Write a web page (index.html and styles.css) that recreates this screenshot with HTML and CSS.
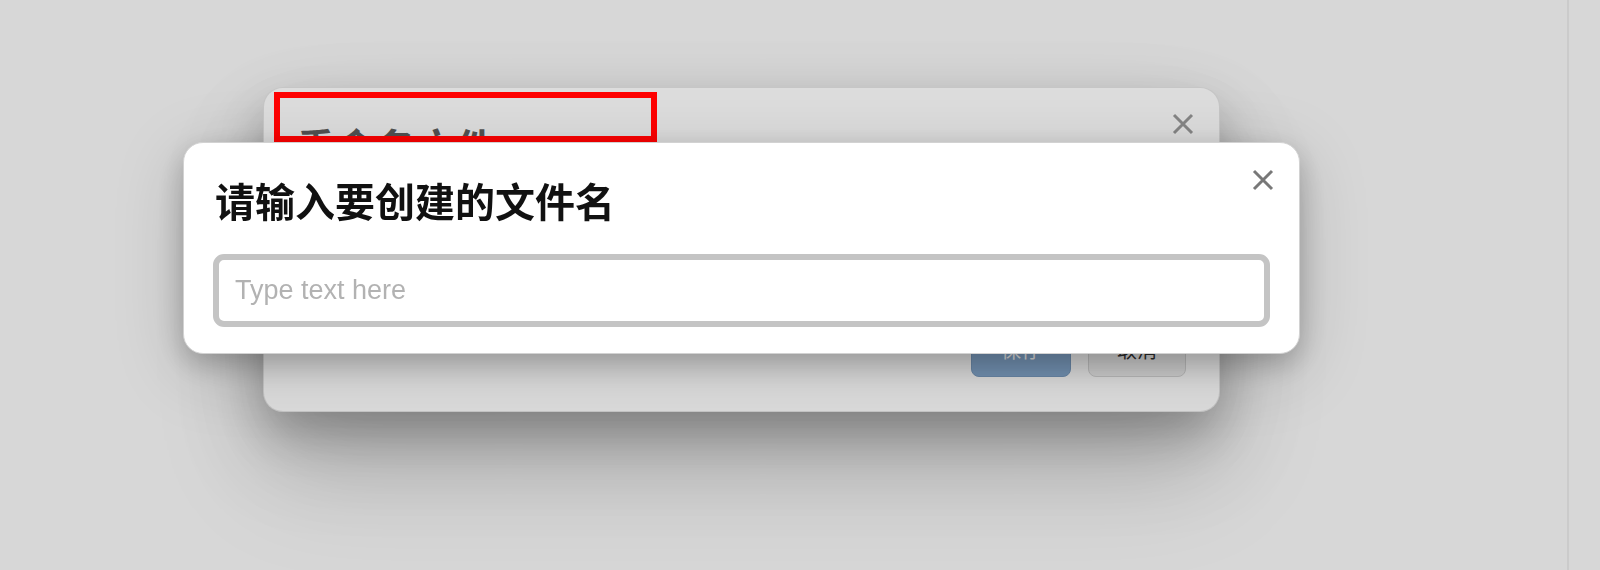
FILE: index.html
```html
<!DOCTYPE html>
<html lang="zh-CN">
<head>
<meta charset="utf-8">
<title>重命名文件</title>
<link rel="stylesheet" href="styles.css">
</head>
<body>
<div class="page">
  <main class="main"></main>
  <aside class="side"></aside>
</div>

<section class="dialog dialog-back" aria-label="重命名文件">
  <h2 class="dialog-title back-title">重命名文件</h2>
  <button class="close close-back" aria-label="关闭">
    <svg viewBox="0 0 22 22" width="22" height="22"><path d="M2 2 L20 20 M20 2 L2 20" /></svg>
  </button>
  <div class="back-body"></div>
  <div class="actions">
    <button class="btn btn-primary">保存</button>
    <button class="btn btn-default">取消</button>
  </div>
</section>

<div class="overlay"></div>
<div class="highlight"></div>

<section class="dialog dialog-front" aria-label="请输入要创建的文件名">
  <h2 class="dialog-title front-title">请输入要创建的文件名</h2>
  <button class="close close-front" aria-label="关闭">
    <svg viewBox="0 0 22 22" width="22" height="22"><path d="M2 2 L20 20 M20 2 L2 20" /></svg>
  </button>
  <input class="text-input" type="text" placeholder="Type text here">
</section>
</body>
</html>
```

FILE: styles.css
```css
* { box-sizing: border-box; }

html, body {
  margin: 0;
  padding: 0;
  width: 1600px;
  height: 570px;
  overflow: hidden;
  background: #f8f8f8;
  font-family: "Liberation Sans", "Noto Sans CJK SC", sans-serif;
}

.page {
  display: flex;
  height: 570px;
}

.main { flex: 1; }

.side {
  width: 33px;
  border-left: 2px solid #ebebeb;
}

.dialog {
  position: absolute;
  background: #ffffff;
  border-radius: 20px;
}

.dialog-title {
  margin: 0;
  font-family: "Noto Sans CJK SC", sans-serif;
  font-weight: 700;
  font-size: 40px;
  line-height: 48px;
  letter-spacing: 0;
}

/* background dialog */
.dialog-back {
  left: 263px;
  top: 87px;
  width: 957px;
  height: 325px;
  padding: 34px 33px 34px 32px;
  display: flex;
  flex-direction: column;
  border: 1px solid rgba(0, 0, 0, 0.1);
  box-shadow:
    0 22px 45px rgba(0, 0, 0, 0.2),
    0 40px 90px rgba(0, 0, 0, 0.16),
    0 60px 120px rgba(0, 0, 0, 0.12);
}

.back-title {
  color: #5f5f5f;
}

.back-body { flex: 1; }

.actions {
  display: flex;
  justify-content: flex-end;
  gap: 17px;
}

.btn {
  height: 56px;
  border-radius: 8px;
  font-family: "Noto Sans CJK SC", sans-serif;
  font-size: 20px;
  padding: 0;
}

.btn-primary {
  width: 100px;
  background: #86aad0;
  border: 1px solid #7c9fc4;
  color: #ffffff;
}

.btn-default {
  width: 98px;
  background: #f1f1f1;
  border: 1px solid #d8d8d8;
  color: #333333;
}

/* close buttons */
.close {
  position: absolute;
  top: 25px;
  right: 25px;
  width: 22px;
  height: 22px;
  padding: 0;
  border: 0;
  background: transparent;
  display: flex;
}

.close svg path {
  fill: none;
  stroke-width: 3;
  stroke-linecap: butt;
}

.close-back svg path { stroke: #9a9a9a; }
.close-front { top: 26px; right: 25px; }
.close-front svg path { stroke: #787878; }

/* dimming layer */
.overlay {
  position: fixed;
  inset: 0;
  background: rgba(0, 0, 0, 0.133);
}

/* highlight frame */
.highlight {
  position: absolute;
  left: 274px;
  top: 92px;
  width: 383px;
  height: 50px;
  border: 6px solid #ff0000;
}

/* foreground dialog */
.dialog-front {
  left: 183px;
  top: 142px;
  width: 1117px;
  height: 212px;
  padding: 33px 29px 26px 29px;
  border: 1px solid #d2d2d2;
  box-shadow:
    0 10px 28px rgba(0, 0, 0, 0.22),
    0 16px 70px rgba(0, 0, 0, 0.17);
}

.front-title {
  color: #111111;
  padding-left: 2px;
}

.text-input {
  display: block;
  width: 100%;
  height: 73px;
  margin-top: 30px;
  border: 6px solid #c4c4c4;
  border-radius: 11px;
  padding: 0 16px;
  font-family: "Liberation Sans", sans-serif;
  font-size: 27px;
  color: #222;
  background: #ffffff;
  outline: none;
}

.text-input::placeholder {
  color: #b2b2b2;
}
```
